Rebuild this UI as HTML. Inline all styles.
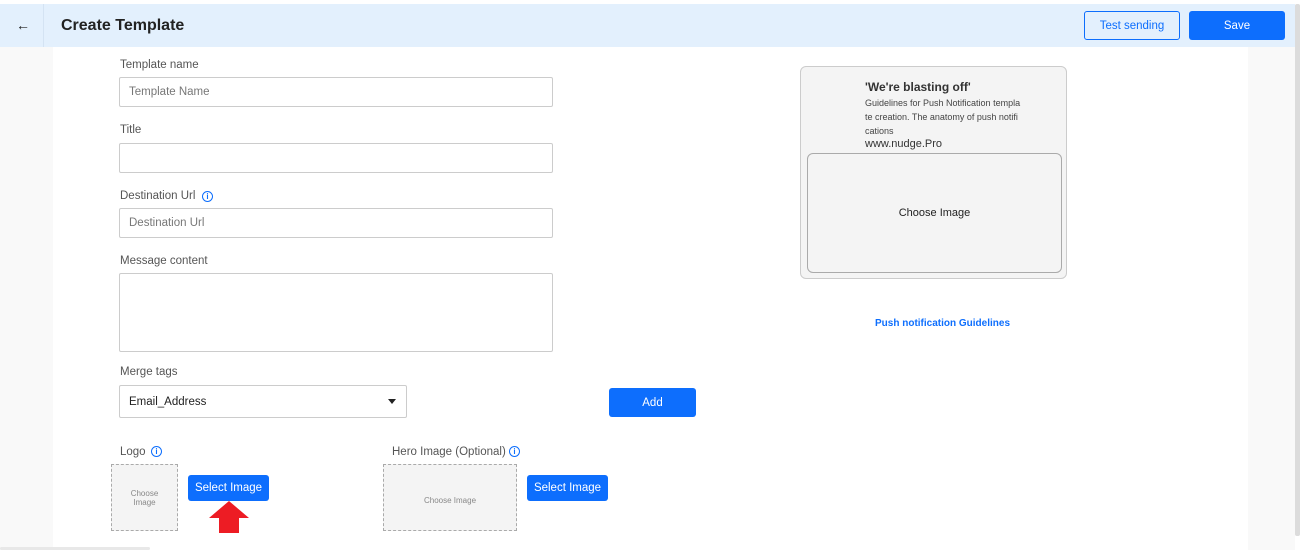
<!DOCTYPE html>
<html><head><style>
*{box-sizing:border-box;margin:0;padding:0}
body{width:1300px;height:550px;overflow:hidden;background:#fff;font-family:"Liberation Sans",sans-serif;position:relative;color:#333}
.a{position:absolute}
.lbl{font-size:11.5px;color:#555}
.inp{border:1px solid #ccc;border-radius:2px;background:#fff;font-size:11.5px;color:#777;padding-left:9px;display:flex;align-items:center}
.btn{background:#0d6efd;color:#fff;border-radius:3px;font-size:11.5px;display:flex;align-items:center;justify-content:center}
.info{width:11px;height:11px;border:1.3px solid #0d6efd;border-radius:50%;color:#0d6efd;font-size:8px;font-weight:bold;display:flex;align-items:center;justify-content:center;line-height:1}
.dash{border:1px dashed #aaa;background:#f4f4f4;color:#888;font-size:8px;display:flex;align-items:center;justify-content:center;text-align:center}
</style></head><body>
<div class="a" style="left:0;top:47px;width:53px;height:503px;background:#f9f9f9"></div>
<div class="a" style="left:1248px;top:47px;width:47px;height:503px;background:#f9f9f9"></div>
<div class="a" style="left:1295px;top:4px;width:5px;height:532px;background:#dcdcdc;border-radius:2px"></div>
<div class="a" style="left:0;top:4px;width:1295px;height:43px;background:#e3f0fd"></div>
<div class="a" style="left:43px;top:4px;width:1px;height:43px;background:#d4e3f3"></div>
<div class="a" style="left:16px;top:17px;font-size:14px;color:#222">←</div>
<div class="a" style="left:61px;top:17px;font-size:16px;font-weight:bold;color:#222">Create Template</div>
<div class="a" style="left:1084px;top:11px;width:96px;height:29px;border:1px solid #0d6efd;border-radius:3px;color:#0d6efd;font-size:11.5px;display:flex;align-items:center;justify-content:center">Test sending</div>
<div class="btn a" style="left:1189px;top:11px;width:96px;height:29px">Save</div>

<div class="a lbl" style="left:120px;top:59px">Template name</div>
<div class="a inp" style="left:119px;top:77px;width:434px;height:30px">Template Name</div>
<div class="a lbl" style="left:120px;top:124px">Title</div>
<div class="a inp" style="left:119px;top:143px;width:434px;height:30px"></div>
<div class="a lbl" style="left:120px;top:190px">Destination Url</div>
<div class="a info" style="left:202px;top:191px">i</div>
<div class="a inp" style="left:119px;top:208px;width:434px;height:30px">Destination Url</div>
<div class="a lbl" style="left:120px;top:255px">Message content</div>
<div class="a inp" style="left:119px;top:273px;width:434px;height:79px"></div>
<div class="a lbl" style="left:120px;top:366px">Merge tags</div>
<div class="a inp" style="left:119px;top:385px;width:288px;height:33px;color:#222">Email_Address</div>
<div class="a" style="left:388px;top:399px;border-left:4px solid transparent;border-right:4px solid transparent;border-top:5px solid #222"></div>
<div class="btn a" style="left:609px;top:388px;width:87px;height:29px">Add</div>

<div class="a lbl" style="left:120px;top:446px">Logo</div>
<div class="a info" style="left:151px;top:446px">i</div>
<div class="a dash" style="left:111px;top:464px;width:67px;height:67px">Choose<br>Image</div>
<div class="btn a" style="left:188px;top:475px;width:81px;height:26px">Select Image</div>
<div class="a" style="left:209px;top:501px;border-left:20px solid transparent;border-right:20px solid transparent;border-bottom:17px solid #ed1c24"></div>
<div class="a" style="left:219px;top:517px;width:20px;height:16px;background:#ed1c24"></div>
<div class="a lbl" style="left:392px;top:446px">Hero Image (Optional)</div>
<div class="a info" style="left:509px;top:446px">i</div>
<div class="a dash" style="left:383px;top:464px;width:134px;height:67px;padding-top:6px">Choose Image</div>
<div class="btn a" style="left:527px;top:475px;width:81px;height:26px">Select Image</div>
<div class="a" style="left:0;top:547px;width:150px;height:3px;background:#e8e8e8;border-radius:2px"></div>

<div class="a" style="left:800px;top:66px;width:267px;height:213px;background:#f4f4f4;border:1px solid #ccc;border-radius:6px"></div>
<div class="a" style="left:865px;top:80px;font-size:12px;font-weight:bold;color:#333">'We're blasting off'</div>
<div class="a" style="left:865px;top:96px;font-size:9px;line-height:14px;color:#444;width:190px">Guidelines for Push Notification templa<br>te creation. The anatomy of push notifi<br>cations</div>
<div class="a" style="left:865px;top:138px;font-size:11px;color:#333">www.nudge.Pro</div>
<div class="a" style="left:807px;top:153px;width:255px;height:120px;border:1px solid #aaa;border-radius:6px;display:flex;align-items:center;justify-content:center;font-size:11px;color:#222">Choose Image</div>
<div class="a" style="left:875px;top:318px;font-size:10px;font-weight:bold;color:#0d6efd">Push notification Guidelines</div>
</body></html>
